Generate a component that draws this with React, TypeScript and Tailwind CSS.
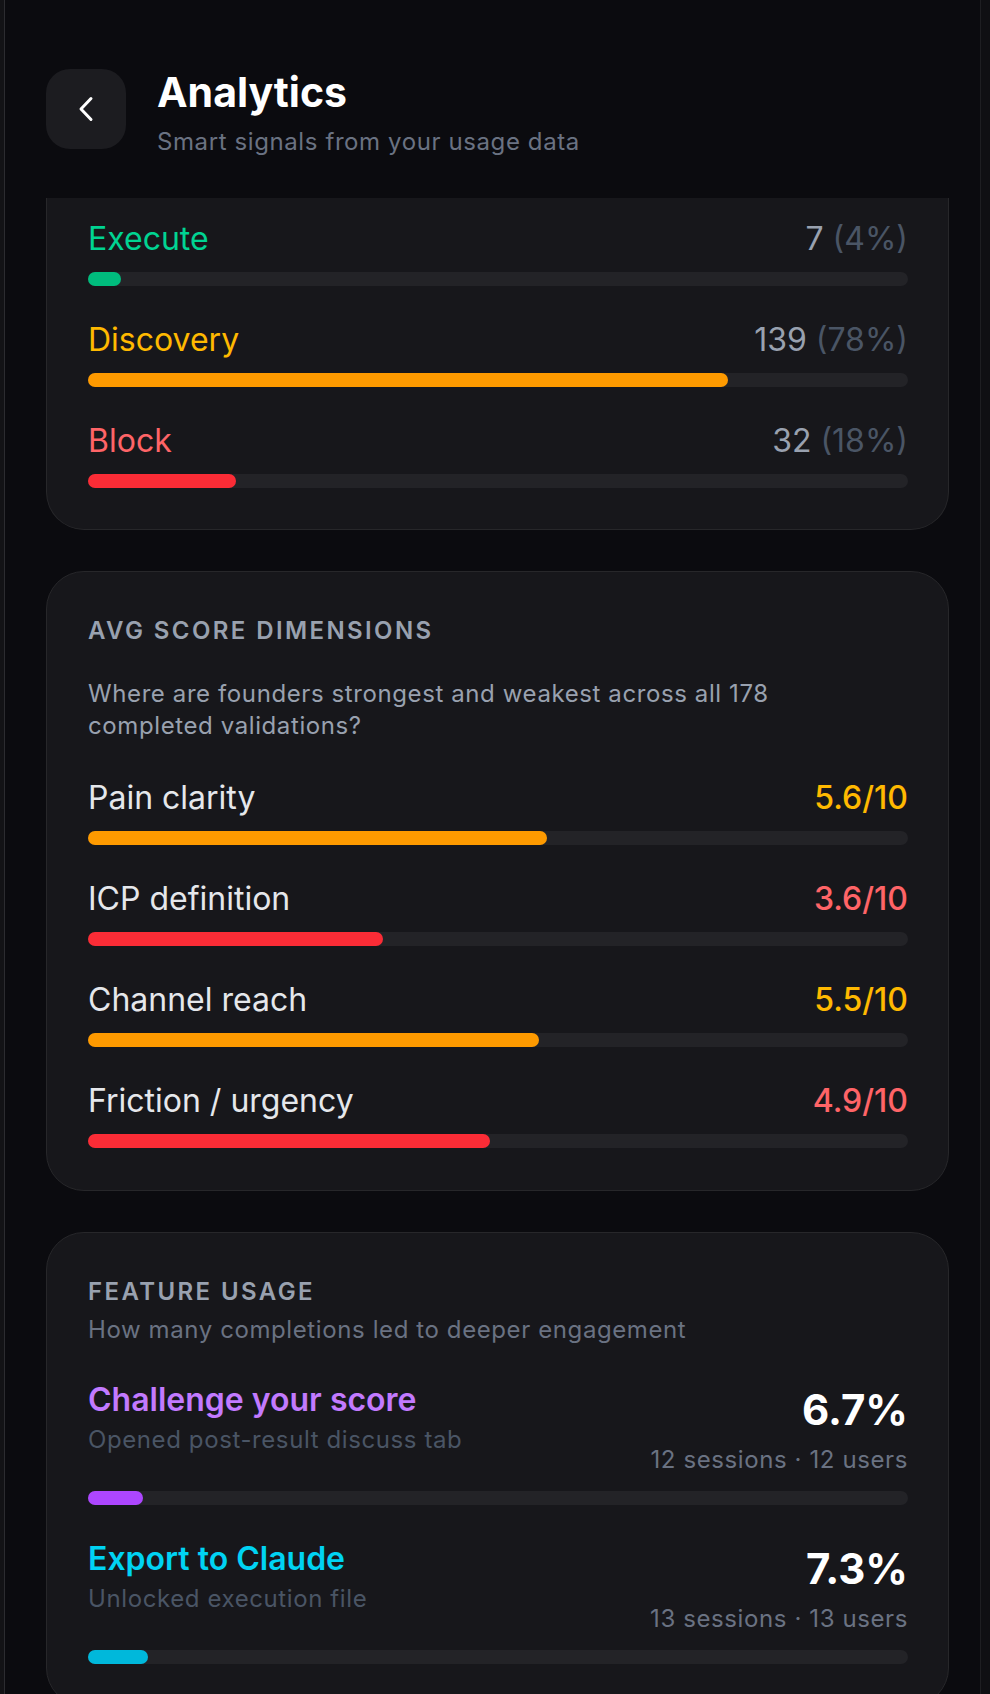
import React from "react"

interface Outcome {
  label: string
  count: number
  pct: number
  text: string
  bar: string
}

interface Dimension {
  label: string
  score: number
  text: string
  bar: string
}

interface Feature {
  title: string
  desc: string
  rate: number
  sessions: number
  users: number
  text: string
  bar: string
}

const outcomes: Outcome[] = [
  { label: "Execute", count: 7, pct: 4, text: "text-emerald-400", bar: "bg-emerald-500" },
  { label: "Discovery", count: 139, pct: 78, text: "text-amber-400", bar: "bg-amber-500" },
  { label: "Block", count: 32, pct: 18, text: "text-red-400", bar: "bg-red-500" },
]

const dimensions: Dimension[] = [
  { label: "Pain clarity", score: 5.6, text: "text-amber-400", bar: "bg-amber-500" },
  { label: "ICP definition", score: 3.6, text: "text-red-400", bar: "bg-red-500" },
  { label: "Channel reach", score: 5.5, text: "text-amber-400", bar: "bg-amber-500" },
  { label: "Friction / urgency", score: 4.9, text: "text-red-400", bar: "bg-red-500" },
]

const features: Feature[] = [
  {
    title: "Challenge your score",
    desc: "Opened post-result discuss tab",
    rate: 6.7,
    sessions: 12,
    users: 12,
    text: "text-purple-400",
    bar: "bg-purple-500",
  },
  {
    title: "Export to Claude",
    desc: "Unlocked execution file",
    rate: 7.3,
    sessions: 13,
    users: 13,
    text: "text-cyan-400",
    bar: "bg-cyan-500",
  },
]

function Bar({ value, color }: { value: number; color: string }) {
  return (
    <div className="h-[14px] w-full rounded-full bg-[#232327]">
      <div className={`h-full rounded-full ${color}`} style={{ width: `${value}%` }} />
    </div>
  )
}

function SectionTitle({ children }: { children: React.ReactNode }) {
  return (
    <h2 className="text-[24px] font-semibold uppercase leading-[32px] tracking-widest text-gray-400">{children}</h2>
  )
}

export default function App() {
  return (
    <div className="flex h-[1694px] w-[990px] overflow-hidden bg-[#0b0b0f] font-['Inter',sans-serif]">
      <div className="w-[4px] bg-[#131316]" />
      <div className="w-px bg-[#2c2c30]" />

      <main className="flex-1 pl-[41px] pr-[31px]">
        {/* Header */}
        <header className="flex h-[198px] items-start gap-[31px] pt-[69px]">
          <button className="flex h-20 w-20 shrink-0 items-center justify-center rounded-[24px] bg-[#1c1c20]">
            <svg width="16" height="26" viewBox="0 0 16 26" fill="none">
              <path d="M13 2.5 L3 13 L13 23.5" stroke="white" strokeWidth="3" strokeLinecap="round" strokeLinejoin="round" />
            </svg>
          </button>
          <div className="-mt-px">
            <h1 className="text-[41px] font-bold leading-[48px] text-white">Analytics</h1>
            <p className="mt-[10px] text-[24px] leading-[32px] tracking-[0.6px] text-gray-500">
              Smart signals from your usage data
            </p>
          </div>
        </header>

        <div className="flex flex-col gap-[41px]">
          {/* Outcome split (scrolled under header) */}
          <section className="rounded-b-[38px] border-x border-b border-zinc-800 bg-[#17171b] pb-[41px] pl-[41px] pr-[40px] pt-[21px]">
            <div className="flex flex-col gap-[34px]">
              {outcomes.map((o) => (
                <div key={o.label}>
                  <div className="flex items-center justify-between text-[32px] leading-[40px]">
                    <span className={o.text}>{o.label}</span>
                    <span className="text-gray-400">
                      {o.count} <span className="text-gray-600">({o.pct}%)</span>
                    </span>
                  </div>
                  <div className="mt-[13px]">
                    <Bar value={o.pct} color={o.bar} />
                  </div>
                </div>
              ))}
            </div>
          </section>

          {/* Avg score dimensions */}
          <section className="rounded-[38px] border border-zinc-800 bg-[#17171b] pb-[42px] pl-[41px] pr-[40px] pt-[43px]">
            <SectionTitle>Avg score dimensions</SectionTitle>
            <p className="mt-[31px] max-w-[780px] text-[24px] leading-[32px] tracking-[0.6px] text-gray-400">
              Where are founders strongest and weakest across all 178 completed validations?
            </p>
            <div className="mt-[36px] flex flex-col gap-[34px]">
              {dimensions.map((d) => (
                <div key={d.label}>
                  <div className="flex items-center justify-between text-[32px] leading-[40px]">
                    <span className="text-gray-200">{d.label}</span>
                    <span className={`font-medium ${d.text}`}>{d.score.toFixed(1)}/10</span>
                  </div>
                  <div className="mt-[13px]">
                    <Bar value={d.score * 10} color={d.bar} />
                  </div>
                </div>
              ))}
            </div>
          </section>

          {/* Feature usage */}
          <section className="rounded-[38px] border border-zinc-800 bg-[#17171b] pb-[41px] pl-[41px] pr-[40px] pt-[43px]">
            <SectionTitle>Feature usage</SectionTitle>
            <p className="mt-[6px] text-[24px] leading-[32px] tracking-[0.6px] text-gray-500">
              How many completions led to deeper engagement
            </p>
            <div className="mt-[34px] flex flex-col gap-[34px]">
              {features.map((f) => (
                <div key={f.title}>
                  <div className="flex items-start justify-between">
                    <div>
                      <div className={`text-[32px] font-semibold leading-[40px] ${f.text}`}>{f.title}</div>
                      <div className="mt-1 text-[24px] leading-[32px] tracking-[0.6px] text-gray-600">{f.desc}</div>
                    </div>
                    <div className="pt-[6px] text-right">
                      <div className="text-[42px] font-bold leading-[48px] text-white">{f.rate}%</div>
                      <div className="mt-[10px] text-[24px] leading-[32px] tracking-[0.6px] text-gray-500">
                        {f.sessions} sessions · {f.users} users
                      </div>
                    </div>
                  </div>
                  <div className="mt-[15px]">
                    <Bar value={f.rate} color={f.bar} />
                  </div>
                </div>
              ))}
            </div>
          </section>
        </div>
      </main>

      <div className="w-px bg-[#1e1e22]" />
      <div className="w-[9px] bg-[#0f0f13]" />
    </div>
  )
}
